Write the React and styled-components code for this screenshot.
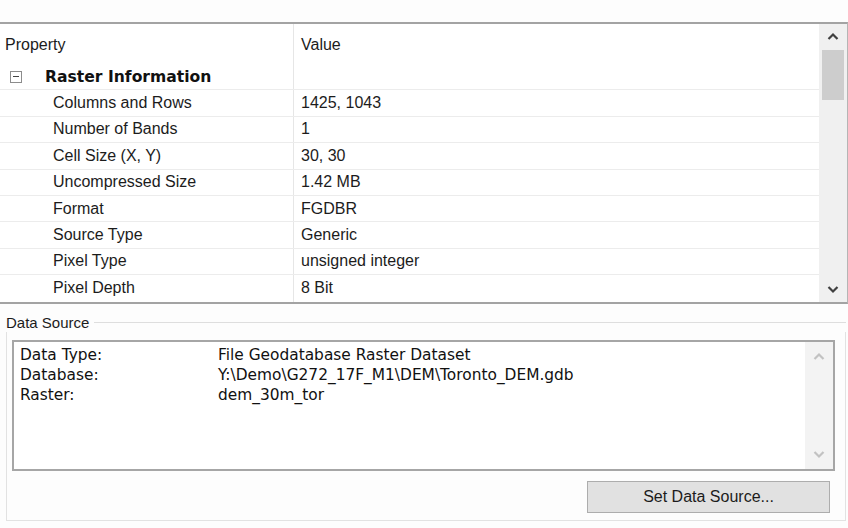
import React from "react";
import styled, { createGlobalStyle } from "styled-components";

const GlobalStyle = createGlobalStyle`
  html, body {
    margin: 0;
    padding: 0;
    background: #fdfdfd;
  }
`;

const Page = styled.div`
  width: 848px;
  height: 528px;
  padding-top: 22px;
  box-sizing: border-box;
  display: flex;
  flex-direction: column;
  font-family: "Liberation Sans", Arial, sans-serif;
  color: #1c1c1c;
  overflow: hidden;
`;

const Grid = styled.div`
  display: flex;
  width: 847px;
  border-top: 2px solid #a3a3a3;
  border-bottom: 2px solid #a3a3a3;
  border-right: 1px solid #b5b5b5;
  background: #fff;
`;

const Table = styled.div`
  flex: 1;
  display: flex;
  flex-direction: column;
`;

const Row = styled.div`
  display: grid;
  grid-template-columns: 294px 1fr;
  height: ${(p) => p.$h || "26.4px"};
  border-bottom: ${(p) => (p.$line ? "1px solid #ececec" : "none")};
  box-sizing: border-box;
`;

const Cell = styled.div`
  display: flex;
  align-items: ${(p) => (p.$top ? "flex-start" : "center")};
  padding-top: ${(p) => (p.$top ? "12px" : "0")};
  padding-left: ${(p) => p.$pad || "7px"};
  font-size: 16px;
  white-space: nowrap;
  border-right: ${(p) => (p.$divider ? "1px solid #e6e6e6" : "none")};
  gap: 23px;
`;

const Category = styled.span`
  font-family: "DejaVu Sans", Verdana, sans-serif;
  font-size: 15.6px;
  font-weight: 700;
  color: #111;
`;

const Toggle = styled.span`
  width: 10px;
  height: 10px;
  border: 1px solid #8c8c8c;
  display: flex;
  align-items: center;
  justify-content: center;
  margin-left: 4px;
  &::after {
    content: "";
    width: 6px;
    height: 1px;
    background: #444;
  }
`;

const ScrollBar = styled.div`
  width: 28px;
  background: ${(p) => p.$bg || "#f0f0f0"};
  display: flex;
  flex-direction: column;
  align-items: center;
  padding: ${(p) => p.$pad || "6px 0"};
  box-sizing: border-box;
`;

const Thumb = styled.div`
  width: 22px;
  height: 50px;
  margin-top: 6px;
  background: #cdcdcd;
`;

const Spacer = styled.div`
  flex: 1;
`;

const Chevron = ({ dir, color }) => (
  <svg width="14" height="14" viewBox="0 0 14 14">
    <polyline
      points={dir === "up" ? "2.5,9 7,4.5 11.5,9" : "2.5,5 7,9.5 11.5,5"}
      fill="none"
      stroke={color}
      strokeWidth="2.2"
    />
  </svg>
);

const Group = styled.div`
  margin: 10px 2px 0 6px;
  display: flex;
  flex-direction: column;
`;

const GroupTitle = styled.div`
  display: flex;
  align-items: center;
  height: 18px;
  font-size: 15px;
  gap: 5px;
  &::after {
    content: "";
    flex: 1;
    height: 1px;
    background: #dedede;
  }
`;

const GroupBody = styled.div`
  border: 1px solid #e2e2e2;
  border-top: none;
  padding: 8px 10px 7px 5px;
  display: flex;
  flex-direction: column;
`;

const TextBox = styled.div`
  height: 131px;
  box-sizing: border-box;
  border: 2px solid #a6a6a6;
  background: #fff;
  display: flex;
`;

const InfoLines = styled.div`
  flex: 1;
  padding: 3px 0 0 6px;
  display: grid;
  grid-template-columns: 198px 1fr;
  grid-auto-rows: 20px;
  font-family: "DejaVu Sans", Verdana, sans-serif;
  font-size: 15.4px;
  color: #111;
  align-content: start;
  align-items: center;
`;

const Button = styled.button`
  align-self: flex-end;
  margin: 10px 5px 0 0;
  width: 243px;
  height: 32px;
  background: #e1e1e1;
  border: 1px solid #adadad;
  font-family: "Liberation Sans", Arial, sans-serif;
  font-size: 16px;
  color: #1c1c1c;
`;

const rows = [
  ["Columns and Rows", "1425, 1043"],
  ["Number of Bands", "1"],
  ["Cell Size (X, Y)", "30, 30"],
  ["Uncompressed Size", "1.42 MB"],
  ["Format", "FGDBR"],
  ["Source Type", "Generic"],
  ["Pixel Type", "unsigned integer"],
  ["Pixel Depth", "8 Bit"],
];

const info = [
  ["Data Type:", "File Geodatabase Raster Dataset"],
  ["Database:", "Y:\\Demo\\G272_17F_M1\\DEM\\Toronto_DEM.gdb"],
  ["Raster:", "dem_30m_tor"],
];

export default function App() {
  return (
    <Page>
      <GlobalStyle />
      <Grid>
        <Table>
          <Row $h="40px">
            <Cell $top $divider $pad="5px">Property</Cell>
            <Cell $top>Value</Cell>
          </Row>
          <Row $line>
            <Cell $divider $pad="6px">
              <Toggle />
              <Category>Raster Information</Category>
            </Cell>
            <Cell />
          </Row>
          {rows.map(([k, v], i) => (
            <Row key={k} $line={i < rows.length - 1}>
              <Cell $divider $pad="53px">{k}</Cell>
              <Cell>{v}</Cell>
            </Row>
          ))}
        </Table>
        <ScrollBar>
          <Chevron dir="up" color="#404040" />
          <Thumb />
          <Spacer />
          <Chevron dir="down" color="#404040" />
        </ScrollBar>
      </Grid>
      <Group>
        <GroupTitle>Data Source</GroupTitle>
        <GroupBody>
          <TextBox>
            <InfoLines>
              {info.map(([k, v]) => (
                <React.Fragment key={k}>
                  <span>{k}</span>
                  <span>{v}</span>
                </React.Fragment>
              ))}
            </InfoLines>
            <ScrollBar $bg="#f3f3f3" $pad="8px 0">
              <Chevron dir="up" color="#c2c2c2" />
              <Spacer />
              <Chevron dir="down" color="#c2c2c2" />
            </ScrollBar>
          </TextBox>
          <Button>Set Data Source...</Button>
        </GroupBody>
      </Group>
    </Page>
  );
}
